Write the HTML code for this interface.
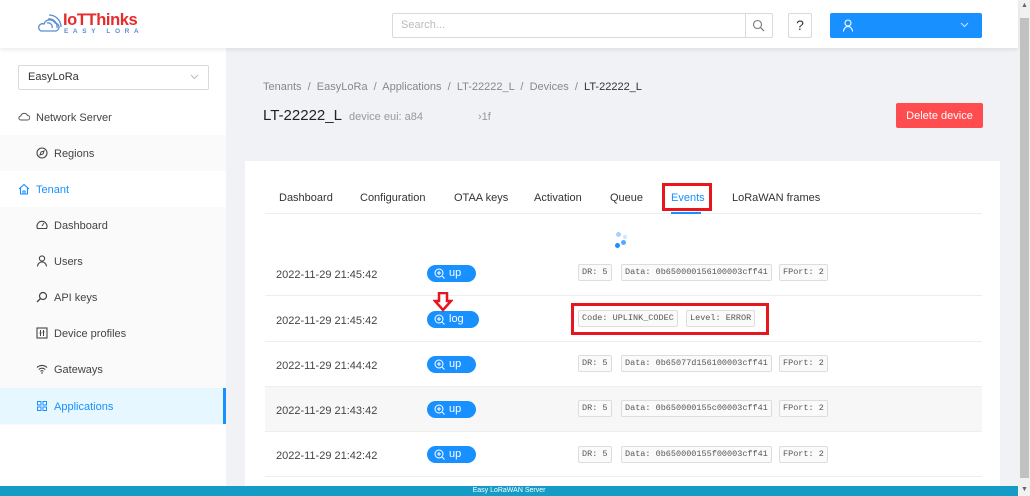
<!DOCTYPE html>
<html><head><meta charset="utf-8"><style>
*{box-sizing:border-box;margin:0;padding:0}
body{width:1030px;height:496px;overflow:hidden;font-family:"Liberation Sans",sans-serif;background:#f0f2f5;position:relative;color:#333;font-size:11px}
.abs{position:absolute}
.header{left:0;top:0;width:1018px;height:48px;background:#fff;box-shadow:0 2px 4px rgba(0,0,0,.08);z-index:2}
.side{left:0;top:48px;width:226px;height:440px;background:#fff}
.mi{position:absolute;left:0;width:226px;height:36px;line-height:38px;font-size:11px;color:#444}
.mi svg{position:absolute;top:12px}
.sub{background:#fafafa}
.card{left:245px;top:161px;width:755px;height:330px;background:#fff}
.tab{position:absolute;top:192px;font-size:11px;color:#333}
.row{position:absolute;left:265px;width:717px;height:45px;border-bottom:1px solid #eee}
.time{position:absolute;left:11px;font-size:11px;color:#444}
.btn{position:absolute;left:162px;height:17px;border-radius:9px;background:#1890ff;color:#fff;font-size:11px;line-height:17px;padding-left:22px;width:49px}
.btn svg{position:absolute;left:7px;top:3px}
.tag{position:absolute;height:17px;border:1px solid #ddd;background:#fafafa;font-family:"Liberation Mono",monospace;font-size:8.5px;line-height:15px;color:#555;padding:0 3px;border-radius:2px}
</style></head><body>
<div class="abs header">
  <svg class="abs" style="left:38px;top:14px" width="24" height="20" viewBox="0 0 24 20"><path d="M3 17h14a4 4 0 0 0 0-8 6 6 0 0 0-11 1 3.5 3.5 0 0 0-3 7z" fill="none" stroke="#5b8dd6" stroke-width="1.3"/><path d="M9 9a4 4 0 0 1 5 5M10 5a8 8 0 0 1 9 9M11 1a12 12 0 0 1 12 12" fill="none" stroke="#5b8dd6" stroke-width="1.3"/></svg>
  <div class="abs" style="left:63px;top:11px;font-size:16.5px;font-weight:bold;color:#e52b2b;letter-spacing:-.4px">IoTThinks</div>
  <div class="abs" style="left:64px;top:28px;font-size:6.5px;color:#5b8dd6;letter-spacing:4.6px;font-weight:bold">EASY LORA</div>
  <div class="abs" style="left:392px;top:13px;width:381px;height:25px;border:1px solid #d9d9d9;border-radius:2px"></div>
  <div class="abs" style="left:401px;top:19px;color:#bbb;font-size:11px">Search...</div>
  <div class="abs" style="left:745px;top:13px;width:1px;height:25px;background:#d9d9d9"></div>
  <svg class="abs" style="left:752px;top:19px" width="13" height="13" viewBox="0 0 13 13"><circle cx="5.5" cy="5.5" r="4" fill="none" stroke="#777" stroke-width="1.1"/><path d="M8.5 8.5l3.5 3.5" stroke="#777" stroke-width="1.2"/></svg>
  <div class="abs" style="left:788px;top:13px;width:24px;height:25px;border:1px solid #d9d9d9;border-radius:2px;text-align:center;line-height:23px;font-size:14px;color:#333">?</div>
  <div class="abs" style="left:830px;top:13px;width:152px;height:25px;background:#1890ff;border-radius:2px"></div>
  <svg class="abs" style="left:842px;top:19px" width="12" height="13" viewBox="0 0 12 13"><circle cx="6" cy="4" r="3" fill="none" stroke="#fff" stroke-width="1.1"/><path d="M1.5 12.5a4.5 5 0 0 1 9 0" fill="none" stroke="#fff" stroke-width="1.1"/></svg>
  <svg class="abs" style="left:960px;top:22px" width="9" height="6" viewBox="0 0 9 6"><path d="M1 1l3.5 3.5L8 1" fill="none" stroke="#d0e6ff" stroke-width="1"/></svg>
</div>
<div class="abs side">
  <div class="abs" style="left:18px;top:17px;width:191px;height:25px;border:1px solid #d9d9d9;border-radius:2px;line-height:23px;padding-left:9px;font-size:11px;color:#333">EasyLoRa</div>
  <svg class="abs" style="left:190px;top:26px" width="9" height="6" viewBox="0 0 9 6"><path d="M1 1l3.5 3.5L8 1" fill="none" stroke="#bbb" stroke-width="1"/></svg>
  <div class="mi" style="top:51px;padding-left:36px"><svg style="left:18px" width="12" height="10" viewBox="0 0 12 10"><path d="M3 9h6.5a2.3 2.3 0 0 0 0-4.6A3.6 3.6 0 0 0 2.8 5 2 2 0 0 0 3 9z" fill="none" stroke="#555" stroke-width="1"/></svg>Network Server</div>
  <div class="mi sub" style="top:87px;padding-left:54px"><svg style="left:36px" width="12" height="12" viewBox="0 0 12 12"><circle cx="6" cy="6" r="5" fill="none" stroke="#444" stroke-width="1.1"/><path d="M8 4L5 5 4 8l3-1z" fill="none" stroke="#444"/></svg>Regions</div>
  <div class="mi" style="top:123px;padding-left:36px;color:#1890ff"><svg style="left:18px" width="12" height="12" viewBox="0 0 12 12"><path d="M1 6L6 1.5 11 6M2.5 5v6h7V5M5 11V8h2v3" fill="none" stroke="#1890ff" stroke-width="1.1"/></svg>Tenant</div>
  <div class="abs sub" style="left:0;top:159px;width:226px;height:218px"></div>
  <div class="mi" style="top:159px;padding-left:54px"><svg style="left:36px" width="12" height="12" viewBox="0 0 12 12"><path d="M1.5 9.5a5 5 0 1 1 9 0z" fill="none" stroke="#444" stroke-width="1.1"/><path d="M6 7l2-3" stroke="#444"/></svg>Dashboard</div>
  <div class="mi" style="top:195px;padding-left:54px"><svg style="left:36px" width="12" height="12" viewBox="0 0 12 12"><circle cx="6" cy="3.5" r="2.6" fill="none" stroke="#444" stroke-width="1.1"/><path d="M1.5 11.5a4.5 4.5 0 0 1 9 0" fill="none" stroke="#444" stroke-width="1.1"/></svg>Users</div>
  <div class="mi" style="top:231px;padding-left:54px"><svg style="left:36px" width="12" height="12" viewBox="0 0 12 12"><circle cx="7" cy="5" r="3.5" fill="none" stroke="#444" stroke-width="1.2"/><path d="M4.5 7.5L1 11" stroke="#444" stroke-width="1.3"/></svg>API keys</div>
  <div class="mi" style="top:267px;padding-left:54px"><svg style="left:36px" width="12" height="12" viewBox="0 0 12 12"><rect x="1" y="1" width="10" height="10" fill="none" stroke="#444" stroke-width="1.1"/><path d="M4.5 3v6M7.5 3v6M3.5 6h2M6.5 5h2" stroke="#444"/></svg>Device profiles</div>
  <div class="mi" style="top:303px;padding-left:54px"><svg style="left:36px" width="12" height="12" viewBox="0 0 12 12"><path d="M1 4.5a7 7 0 0 1 10 0M2.8 6.5a4.5 4.5 0 0 1 6.4 0M4.5 8.4a2 2 0 0 1 3 0" fill="none" stroke="#444" stroke-width="1.1"/><circle cx="6" cy="10" r=".8" fill="#444"/></svg>Gateways</div>
  <div class="mi" style="top:340px;padding-left:54px;background:#e6f7ff;color:#1890ff;border-right:3px solid #1890ff"><svg style="left:36px" width="12" height="12" viewBox="0 0 12 12"><rect x="1.5" y="1.5" width="3.5" height="3.5" fill="none" stroke="#1890ff"/><rect x="7" y="1.5" width="3.5" height="3.5" fill="none" stroke="#1890ff"/><rect x="1.5" y="7" width="3.5" height="3.5" fill="none" stroke="#1890ff"/><rect x="7" y="7" width="3.5" height="3.5" fill="none" stroke="#1890ff"/></svg>Applications</div>
</div>
<div class="abs" style="left:263px;top:81px;font-size:11px;color:#888">Tenants &nbsp;/&nbsp; EasyLoRa &nbsp;/&nbsp; Applications &nbsp;/&nbsp; LT-22222_L &nbsp;/&nbsp; Devices &nbsp;/&nbsp; <span style="color:#333">LT-22222_L</span></div>
<div class="abs" style="left:263px;top:107px;font-size:15px;color:#222">LT-22222_L</div>
<div class="abs" style="left:349px;top:111px;font-size:11px;color:#999">device eui: a84</div>
<div class="abs" style="left:478px;top:111px;font-size:11px;color:#999">›1f</div>
<div class="abs" style="left:896px;top:103px;width:87px;height:25px;background:#ff4d4f;border-radius:2px;color:#fff;font-size:11px;text-align:center;line-height:26px">Delete device</div>
<div class="abs card"></div>
<div class="tab" style="left:279px">Dashboard</div>
<div class="tab" style="left:360px">Configuration</div>
<div class="tab" style="left:454px">OTAA keys</div>
<div class="tab" style="left:534px">Activation</div>
<div class="tab" style="left:610px">Queue</div>
<div class="tab" style="left:671px;color:#1890ff">Events</div>
<div class="tab" style="left:732px">LoRaWAN frames</div>
<div class="abs" style="left:265px;top:213px;width:717px;height:1px;background:#eee"></div>
<div class="abs" style="left:671px;top:212px;width:30px;height:2px;background:#1890ff"></div>
<div class="abs" style="left:662px;top:183px;width:50px;height:28px;border:3px solid #e8141e"></div>
<div class="abs" style="left:616px;top:232px;width:5px;height:5px;border-radius:50%;background:#a8d2ff"></div>
<div class="abs" style="left:623px;top:235px;width:4px;height:4px;border-radius:50%;background:#cde5ff"></div>
<div class="abs" style="left:621px;top:240px;width:5px;height:5px;border-radius:50%;background:#5aa9ff"></div>
<div class="abs" style="left:615px;top:243px;width:5px;height:5px;border-radius:50%;background:#1890ff"></div>

<div class="row" style="top:251px"><div class="time" style="top:18px">2022-11-29 21:45:42</div></div>
<div class="row" style="top:297px"><div class="time" style="top:18px">2022-11-29 21:45:42</div></div>
<div class="row" style="top:342px"><div class="time" style="top:18px">2022-11-29 21:44:42</div></div>
<div class="row" style="top:387px;background:#f7f7f7"><div class="time" style="top:18px">2022-11-29 21:43:42</div></div>
<div class="row" style="top:432px"><div class="time" style="top:18px">2022-11-29 21:42:42</div></div>

<div class="abs btn" style="left:427px;top:265px"><svg width="11" height="11" viewBox="0 0 11 11"><circle cx="5" cy="5" r="4" fill="none" stroke="#fff"/><path d="M3 5h4M5 3v4M8 8l2.5 2.5" stroke="#fff"/></svg>up</div>
<div class="abs btn" style="left:427px;top:311px;width:52px"><svg width="11" height="11" viewBox="0 0 11 11"><circle cx="5" cy="5" r="4" fill="none" stroke="#fff"/><path d="M3 5h4M5 3v4M8 8l2.5 2.5" stroke="#fff"/></svg>log</div>
<div class="abs btn" style="left:427px;top:356px"><svg width="11" height="11" viewBox="0 0 11 11"><circle cx="5" cy="5" r="4" fill="none" stroke="#fff"/><path d="M3 5h4M5 3v4M8 8l2.5 2.5" stroke="#fff"/></svg>up</div>
<div class="abs btn" style="left:427px;top:401px"><svg width="11" height="11" viewBox="0 0 11 11"><circle cx="5" cy="5" r="4" fill="none" stroke="#fff"/><path d="M3 5h4M5 3v4M8 8l2.5 2.5" stroke="#fff"/></svg>up</div>
<div class="abs btn" style="left:427px;top:446px"><svg width="11" height="11" viewBox="0 0 11 11"><circle cx="5" cy="5" r="4" fill="none" stroke="#fff"/><path d="M3 5h4M5 3v4M8 8l2.5 2.5" stroke="#fff"/></svg>up</div>

<svg class="abs" style="left:433px;top:292px" width="20" height="20" viewBox="0 0 20 20"><path d="M6 1h8v8h4l-8 9-8-9h4z" fill="#fff" stroke="#e8141e" stroke-width="2.5"/></svg>

<div class="tag" style="left:578px;top:264px">DR: 5</div><div class="tag" style="left:621px;top:264px">Data: 0b650000156100003cff41</div><div class="tag" style="left:779px;top:264px">FPort: 2</div>
<div class="tag" style="left:578px;top:310px">Code: UPLINK_CODEC</div><div class="tag" style="left:686px;top:310px">Level: ERROR</div>
<div class="abs" style="left:571px;top:303px;width:198px;height:32px;border:3px solid #e8141e"></div>
<div class="tag" style="left:578px;top:355px">DR: 5</div><div class="tag" style="left:621px;top:355px">Data: 0b65077d156100003cff41</div><div class="tag" style="left:779px;top:355px">FPort: 2</div>
<div class="tag" style="left:578px;top:400px">DR: 5</div><div class="tag" style="left:621px;top:400px">Data: 0b650000155c00003cff41</div><div class="tag" style="left:779px;top:400px">FPort: 2</div>
<div class="tag" style="left:578px;top:446px">DR: 5</div><div class="tag" style="left:621px;top:446px">Data: 0b650000155f00003cff41</div><div class="tag" style="left:779px;top:446px">FPort: 2</div>

<div class="abs" style="left:1018px;top:0;width:12px;height:496px;background:#f1f1f1"></div>
<div class="abs" style="left:1020px;top:18px;width:9px;height:460px;background:#c1c1c1"></div>
<div class="abs" style="left:1021px;top:2px;font-size:7px;color:#666">▲</div>
<div class="abs" style="left:1021px;top:486px;font-size:7px;color:#666">▼</div>
<div class="abs" style="left:0;top:486px;width:1018px;height:10px;background:#159cc6;color:#fff;font-size:7px;text-align:center;line-height:10px">Easy LoRaWAN Server</div>
</body></html>
